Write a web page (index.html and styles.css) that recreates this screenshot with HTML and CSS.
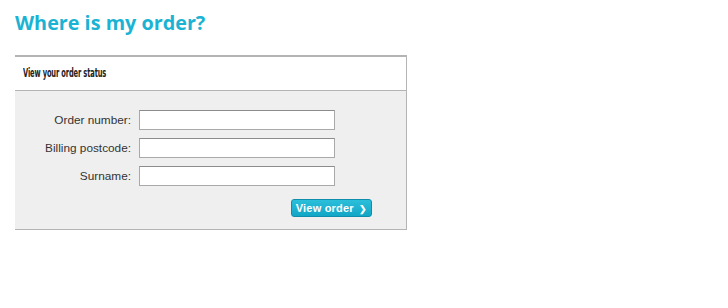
FILE: index.html
```html
<!DOCTYPE html>
<html>
<head>
<meta charset="utf-8">
<link rel="stylesheet" href="styles.css">
</head>
<body>
<h1 class="title">Where is my order?</h1>
<div class="panel">
  <div class="panel-head"><span class="head-text">View your order status</span></div>
  <form class="panel-body">
    <div class="row"><label class="lbl">Order number:</label><input class="field" type="text"></div>
    <div class="row"><label class="lbl">Billing postcode:</label><input class="field" type="text"></div>
    <div class="row"><label class="lbl">Surname:</label><input class="field" type="text"></div>
    <div class="actions"><button class="btn" type="button">View order <span class="chev">&#x276F;</span></button></div>
  </form>
</div>
</body>
</html>
```
FILE: styles.css
```css
html, body { margin: 0; padding: 0; background: #fff; }
body { padding: 8px 15px; font-family: "Liberation Sans", Arial, sans-serif; }
.title {
  margin: 0;
  font-family: "Open Sans", sans-serif;
  font-weight: 700;
  font-size: 19.8px;
  line-height: 30px;
  color: #1ab3d3;
  height: 47px;
}
.panel {
  width: 391px;
  border-top: 2px solid #b4b4b4;
  border-right: 1px solid #b4b4b4;
  border-bottom: 1px solid #b4b4b4;
  background: #efefef;
}
.panel-head {
  background: #fff;
  height: 33px;
  line-height: 33px;
  padding-left: 8px;
  border-bottom: 1px solid #b4b4b4;
  font-family: "DejaVu Sans Condensed", "DejaVu Sans", sans-serif;
  font-stretch: condensed;
  font-weight: 700;
  font-size: 11.5px;
  color: #222;
}
.head-text {
  display: inline-block;
  transform: scaleX(0.645);
  transform-origin: left center;
  letter-spacing: -0.2px;
}
.panel-body {
  margin: 0;
  padding: 19px 0 12px 0;
}
.row {
  display: flex;
  align-items: center;
  height: 20px;
  margin-bottom: 8px;
}
.lbl {
  width: 116px;
  text-align: right;
  padding-right: 8px;
  font-size: 11.8px;
  color: #333;
}
.field {
  box-sizing: border-box;
  width: 196px;
  height: 20px;
  margin: 0;
  padding: 0 3px;
  border: 1px solid #a9a9a9;
  border-top-color: #8c8c8c;
  background: #fff;
}
.actions {
  display: flex;
  justify-content: flex-end;
  padding-right: 34px;
  padding-top: 5px;
}
.btn {
  box-sizing: border-box;
  width: 81px;
  height: 18px;
  padding: 0 0 1px 0;
  border: 1px solid #0e8eab;
  border-radius: 3px;
  background: linear-gradient(#2cbfdc, #12a6c6);
  color: #fff;
  font-family: "Liberation Sans", Arial, sans-serif;
  font-weight: 700;
  font-size: 11px;
  letter-spacing: 0.2px;
  cursor: pointer;
}
.chev { font-size: 9px; margin-left: 2px; }
```
